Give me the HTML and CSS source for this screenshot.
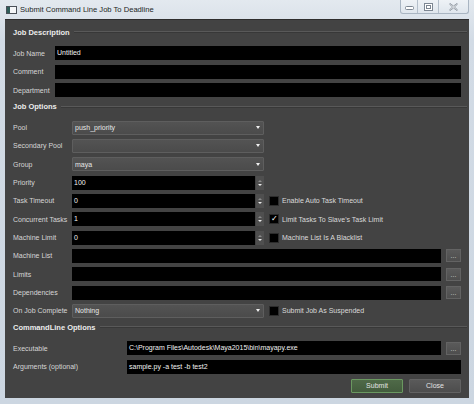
FILE: index.html
```html
<!DOCTYPE html>
<html lang="en">
<head>
  <meta charset="UTF-8" />
  <title>Submit Command Line Job To Deadline</title>
  <link rel="stylesheet" href="styles.css">
</head>
<body>
  <div class="window">

    <!-- Title bar -->
    <div class="titlebar">
      <svg class="app-icon" width="11" height="8" viewBox="0 0 11 8">
        <rect x="0.5" y="0.5" width="10" height="7" fill="#f4f6f8" stroke="#4a5058"/>
        <rect x="1" y="1" width="3" height="6" fill="#2f5c58"/>
      </svg>
      <div class="title">Submit Command Line Job To Deadline</div>
      <div class="caption-btns">
        <div class="cap-btn cap-min">
          <svg width="9" height="4" viewBox="0 0 9 4"><rect x="0.5" y="0.5" width="8" height="3" rx="1" fill="#fff" stroke="#7c8692"/></svg>
        </div>
        <div class="cap-btn cap-max">
          <svg width="9" height="8" viewBox="0 0 9 8"><rect x="0.5" y="0.5" width="8" height="7" fill="#fff" stroke="#7c8692"/><rect x="2.5" y="2.5" width="4" height="3" fill="none" stroke="#7c8692"/></svg>
        </div>
        <div class="cap-btn cap-close">
          <svg width="9" height="8" viewBox="0 0 9 8"><path d="M1 0.5 L4.5 3 L8 0.5 L8.5 1.2 L5.4 4 L8.5 6.8 L8 7.5 L4.5 5 L1 7.5 L0.5 6.8 L3.6 4 L0.5 1.2 Z" fill="#fff" stroke="#7c8692" stroke-width="0.8"/></svg>
        </div>
      </div>
    </div>

    <!-- Client area -->
    <div class="client">

      <div class="section-head"><span>Job Description</span><i></i></div>
      <div class="rows rows-desc">
        <div class="row"><label>Job Name</label><div class="field">Untitled</div></div>
        <div class="row"><label>Comment</label><div class="field"></div></div>
        <div class="row"><label>Department</label><div class="field"></div></div>
      </div>

      <div class="section-head"><span>Job Options</span><i></i></div>
      <div class="rows rows-opts">
        <div class="row">
          <label>Pool</label>
          <div class="combo">push_priority<b class="arrow"></b></div>
        </div>
        <div class="row">
          <label>Secondary Pool</label>
          <div class="combo"><b class="arrow"></b></div>
        </div>
        <div class="row">
          <label>Group</label>
          <div class="combo">maya<b class="arrow"></b></div>
        </div>
        <div class="row">
          <label>Priority</label>
          <div class="spin"><div class="spin-val">100</div><div class="spin-btns"><b class="up"></b><b class="down"></b></div></div>
        </div>
        <div class="row">
          <label>Task Timeout</label>
          <div class="spin"><div class="spin-val">0</div><div class="spin-btns"><b class="up"></b><b class="down"></b></div></div>
          <div class="check"><span class="box"></span>Enable Auto Task Timeout</div>
        </div>
        <div class="row">
          <label>Concurrent Tasks</label>
          <div class="spin"><div class="spin-val">1</div><div class="spin-btns"><b class="up"></b><b class="down"></b></div></div>
          <div class="check"><span class="box checked">&#10003;</span>Limit Tasks To Slave's Task Limit</div>
        </div>
        <div class="row">
          <label>Machine Limit</label>
          <div class="spin"><div class="spin-val">0</div><div class="spin-btns"><b class="up"></b><b class="down"></b></div></div>
          <div class="check"><span class="box"></span>Machine List Is A Blacklist</div>
        </div>
        <div class="row">
          <label>Machine List</label>
          <div class="field"></div><div class="dots">...</div>
        </div>
        <div class="row">
          <label>Limits</label>
          <div class="field"></div><div class="dots">...</div>
        </div>
        <div class="row">
          <label>Dependencies</label>
          <div class="field"></div><div class="dots">...</div>
        </div>
        <div class="row">
          <label>On Job Complete</label>
          <div class="combo">Nothing<b class="arrow"></b></div>
          <div class="check"><span class="box"></span>Submit Job As Suspended</div>
        </div>
      </div>

      <div class="section-head head-cmd"><span>CommandLine Options</span><i></i></div>
      <div class="rows rows-cmd">
        <div class="row">
          <label>Executable</label>
          <div class="field">C:\Program Files\Autodesk\Maya2015\bin\mayapy.exe</div><div class="dots">...</div>
        </div>
        <div class="row">
          <label>Arguments (optional)</label>
          <div class="field">sample.py -a test -b test2</div>
        </div>
      </div>

      <div class="actions">
        <div class="btn btn-submit">Submit</div>
        <div class="btn">Close</div>
      </div>
    </div>
  </div>
</body>
</html>
```

FILE: styles.css
```css
body {
  margin: 0;
  padding: 0;
  font-family: "Liberation Sans", Arial, sans-serif;
  background: #1e2226;
}

.window {
  width: 474px;
  height: 404px;
  display: flex;
  flex-direction: column;
  background: linear-gradient(to bottom, #e3e9ef, #d2dbe5 40px, #ccd6e1);
  box-sizing: border-box;
  overflow: hidden;
}

/* Title bar */
.titlebar {
  height: 19px;
  display: flex;
  align-items: center;
  flex-shrink: 0;
}

.app-icon {
  margin-left: 6px;
  margin-top: 1px;
}

.title {
  margin-left: 3px;
  font-size: 7.6px;
  color: #1b1f24;
}

.caption-btns {
  margin-left: auto;
  margin-right: 5px;
  align-self: flex-start;
  display: flex;
  height: 13px;
  border: 1px solid #a9b5c2;
  border-top: none;
  border-radius: 0 0 3px 3px;
  background: linear-gradient(to bottom, #eef2f6, #dfe6ed);
}

.cap-btn {
  display: flex;
  align-items: center;
  justify-content: center;
  border-right: 1px solid #b4bfcb;
}

.cap-btn:last-child {
  border-right: none;
}

.cap-min { width: 16px; }
.cap-max { width: 20px; }
.cap-close { width: 29px; }

.cap-min svg { margin-top: 3px; }

/* Client area */
.client {
  flex: 1;
  margin: 0 5px 6px 5px;
  background: #434343;
  padding: 8px 8px 0 8px;
  box-shadow: inset 0 1px 0 #2e2e2e;
}

.section-head {
  display: flex;
  align-items: center;
  height: 10px;
  margin-right: -6px;
  font-size: 7.5px;
  font-weight: bold;
  color: #ececec;
}

.section-head i {
  flex: 1;
  height: 1px;
  margin: -1px 0 0 4px;
  background: #595959;
  box-shadow: 0 1px 0 #383838;
}

.rows {
  display: flex;
  flex-direction: column;
  gap: 4.5px;
  margin: 9px 0 4.5px;
}

.row {
  display: flex;
  align-items: center;
  height: 14px;
}

.row label {
  flex-shrink: 0;
  font-size: 7px;
  color: #d6d6d6;
}

.rows-desc label { width: 42px; }
.rows-opts label { width: 59px; }
.rows-cmd label { width: 114px; }

.rows-opts { gap: 4.35px; }

.field {
  flex: 1;
  height: 14px;
  line-height: 14px;
  background: #000;
  color: #f2f2f2;
  font-size: 7px;
  padding-left: 2px;
  white-space: nowrap;
  overflow: hidden;
}

.dots {
  width: 15px;
  height: 13px;
  margin-left: 5px;
  line-height: 11px;
  text-align: center;
  font-size: 7px;
  color: #cfcfcf;
  background: linear-gradient(to bottom, #5a5a5a, #4e4e4e);
  border: 1px solid #636363;
  box-sizing: border-box;
}

.combo {
  width: 192px;
  height: 14px;
  box-sizing: border-box;
  display: flex;
  align-items: center;
  padding-left: 2px;
  font-size: 7px;
  color: #e6e6e6;
  background: linear-gradient(to bottom, #535353, #4b4b4b);
  border: 1px solid #5e5e5e;
  border-radius: 1px;
}

.arrow {
  margin-left: auto;
  margin-right: 3px;
  width: 0;
  height: 0;
  border-left: 2.5px solid transparent;
  border-right: 2.5px solid transparent;
  border-top: 3px solid #f0f0f0;
}

.spin {
  width: 192px;
  height: 14px;
  display: flex;
}

.spin-val {
  flex: 1;
  background: #000;
  color: #f2f2f2;
  font-size: 7px;
  line-height: 14px;
  padding-left: 2px;
}

.spin-btns {
  width: 8px;
  margin-left: 1px;
  background: #4f4f4f;
  display: flex;
  flex-direction: column;
  align-items: center;
  justify-content: center;
  gap: 2px;
}

.spin-btns b {
  width: 0;
  height: 0;
  border-left: 2px solid transparent;
  border-right: 2px solid transparent;
}

.spin-btns .up { border-bottom: 2px solid #8a8a8a; }
.spin-btns .down { border-top: 2px solid #e8e8e8; }

.check {
  display: flex;
  align-items: center;
  margin-left: 5px;
  font-size: 7px;
  color: #dadada;
}

.box {
  width: 8px;
  height: 8px;
  margin-right: 3px;
  background: #000;
  border: 1px solid #2c2c2c;
  font-size: 8px;
  line-height: 8px;
  text-align: center;
  color: #fff;
}

.actions {
  display: flex;
  justify-content: flex-end;
  gap: 6px;
  margin-top: 5px;
}

.btn {
  width: 52px;
  height: 14px;
  box-sizing: border-box;
  font-size: 7px;
  line-height: 12px;
  text-align: center;
  color: #e4e4e4;
  background: linear-gradient(to bottom, #5a5a5a, #4d4d4d);
  border: 1px solid #626262;
  border-radius: 1px;
}

.btn-submit {
  background: linear-gradient(to bottom, #4f6a48, #435c3d);
  border-color: #6a9860;
}
```
